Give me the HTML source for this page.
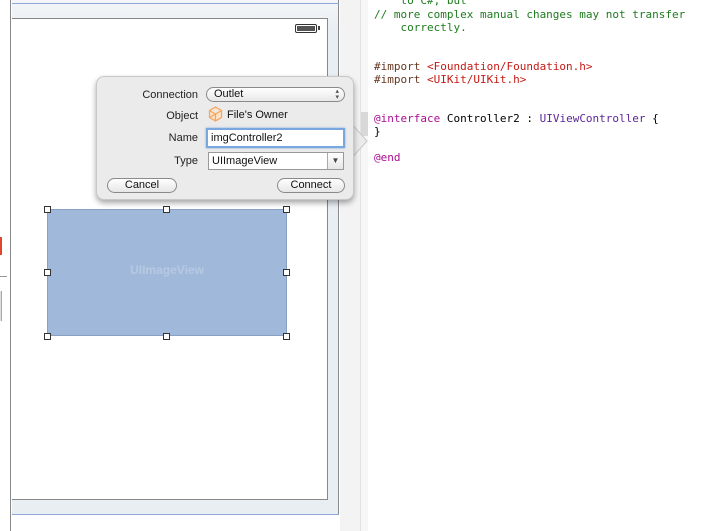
<!DOCTYPE html>
<html><head><meta charset="utf-8"><style>
*{margin:0;padding:0;box-sizing:border-box}
body{width:717px;height:531px;overflow:hidden;background:#fff;position:relative;font-family:"Liberation Sans",sans-serif;}
.a{position:absolute}
.code{position:absolute;left:374px;font-family:"DejaVu Sans Mono","Liberation Mono",monospace;font-size:11px;line-height:13px;white-space:pre;color:#000}
.g{color:#1d7c1d}.r{color:#c41a16}.p{color:#aa0d91}.b{color:#643820}.v{color:#5c2699}
.h{position:absolute;width:7px;height:7px;border:1px solid #333;background:#fff}
.lbl{position:absolute;font-size:11px;color:#222;text-align:right;width:101px;left:0}
.btn{position:absolute;height:15px;border:1px solid #8a8a8a;border-radius:8px;background:linear-gradient(#fff,#e6e6e6);font-size:11px;text-align:center;line-height:13px;color:#111}
</style></head><body>
<div class="a" style="left:0;top:0;width:11px;height:531px;background:#fff;border-right:1px solid #888"></div>
<div class="a" style="left:0;top:237px;width:2px;height:18px;background:#e0452e"></div>
<div class="a" style="left:0;top:276px;width:7px;height:1px;background:#999"></div>
<div class="a" style="left:0;top:291px;width:2px;height:30px;background:#ddd;border-right:1px solid #aaa"></div>
<div class="a" style="left:12px;top:0;width:327px;height:531px;background:linear-gradient(#f4f6f8,#e9eef3 30px);border-right:1px solid #888"></div>
<div class="a" style="left:12px;top:3px;width:327px;height:1px;background:#8fa8d8"></div>
<div class="a" style="left:12px;top:18px;width:316px;height:482px;background:#fff;border:1px solid #888;border-left:none"></div>
<div class="a" style="left:12px;top:514px;width:327px;height:1px;background:#8fa8d8"></div>
<div class="a" style="left:12px;top:515px;width:327px;height:16px;background:#fff"></div>
<div class="a" style="left:295px;top:24px;width:22px;height:9px;border:1px solid #333;border-radius:2px;background:#fff;padding:1px"><div style="width:100%;height:100%;background:#555"></div></div>
<div class="a" style="left:318px;top:26px;width:2px;height:4px;background:#444"></div>
<div class="a" style="left:340px;top:0;width:20px;height:531px;background:#f3f3f3"></div>
<div class="a" style="left:360px;top:0;width:1px;height:531px;background:#e2e2e2"></div>
<div class="a" style="left:361px;top:0;width:7px;height:531px;background:#f7f7f7"></div>
<div class="a" style="left:361px;top:112px;width:7px;height:24px;background:#d8d8d8"></div>
<div class="code g" style="top:-6px">    to C#, but</div>
<div class="code g" style="top:8px">// more complex manual changes may not transfer</div>
<div class="code g" style="top:21px">    correctly.</div>
<div class="code" style="top:60px"><span class="b">#import</span> <span class="r">&lt;Foundation/Foundation.h&gt;</span></div>
<div class="code" style="top:73px"><span class="b">#import</span> <span class="r">&lt;UIKit/UIKit.h&gt;</span></div>
<div class="code" style="top:112px"><span class="p">@interface</span> Controller2 : <span class="v">UIViewController</span> {</div>
<div class="code" style="top:125px">}</div>
<div class="code" style="top:151px"><span class="p">@end</span></div>
<div class="a" style="left:47px;top:209px;width:240px;height:127px;background:#a0b9da;border:1px solid #8aa0c0"></div>
<div class="a" style="left:47px;top:263px;width:240px;text-align:center;font-size:12px;font-weight:bold;color:#b7c9e2">UIImageView</div>
<div class="h" style="left:44px;top:206px"></div><div class="h" style="left:163px;top:206px"></div><div class="h" style="left:283px;top:206px"></div>
<div class="h" style="left:44px;top:269px"></div><div class="h" style="left:283px;top:269px"></div>
<div class="h" style="left:44px;top:333px"></div><div class="h" style="left:163px;top:333px"></div><div class="h" style="left:283px;top:333px"></div>
<svg class="a" style="left:350px;top:118px" width="22" height="46"><path d="M0 4 L17 23 L0 42 Z" fill="#ebebeb" stroke="#c8c8c8"/></svg>
<div class="a" style="left:96px;top:76px;width:258px;height:124px;background:#ebebeb;border:1px solid #c8c8c8;border-radius:8px;box-shadow:0 3px 6px rgba(0,0,0,.35)">
<div class="lbl" style="top:12px">Connection</div>
<div class="lbl" style="top:33px">Object</div>
<div class="lbl" style="top:55px">Name</div>
<div class="lbl" style="top:78px">Type</div>
<div class="a" style="left:109px;top:10px;width:139px;height:15px;border:1px solid #8a8a8a;border-radius:8px;background:linear-gradient(#fff,#e8e8e8);font-size:11px;line-height:13px;padding-left:7px;color:#111">Outlet<span style="position:absolute;right:5px;top:1px;font-size:7px;color:#555;line-height:6px">▴<br>▾</span></div>
<svg class="a" style="left:111px;top:29px" width="15" height="16"><path d="M7.5 1 L13.5 4.5 L13.5 11.5 L7.5 15 L1.5 11.5 L1.5 4.5 Z M1.5 4.5 L7.5 8 L13.5 4.5 M7.5 8 L7.5 15 M1.5 11.5 L13.5 4.5" fill="#fde3c4" stroke="#f4a460" stroke-width="1.2"/></svg>
<div class="a" style="left:130px;top:32px;font-size:11px;color:#111">File's Owner</div>
<div class="a" style="left:109px;top:51px;width:139px;height:20px;border:2px solid #7aa7dd;background:#fff;font-size:11px;line-height:16px;padding-left:3px;color:#111;box-shadow:0 0 2px #7aa7dd">imgController2</div>
<div class="a" style="left:111px;top:75px;width:136px;height:18px;border:1px solid #999;background:#fff;font-size:11px;line-height:16px;padding-left:3px;color:#111">UIImageView<div style="position:absolute;right:0;top:0;width:16px;height:16px;border-left:1px solid #aaa;background:linear-gradient(#fff,#e6e6e6);font-size:8px;text-align:center;color:#444">▼</div></div>
<div class="btn" style="left:10px;top:101px;width:70px">Cancel</div>
<div class="btn" style="left:180px;top:101px;width:68px">Connect</div>
</div>
</body></html>
